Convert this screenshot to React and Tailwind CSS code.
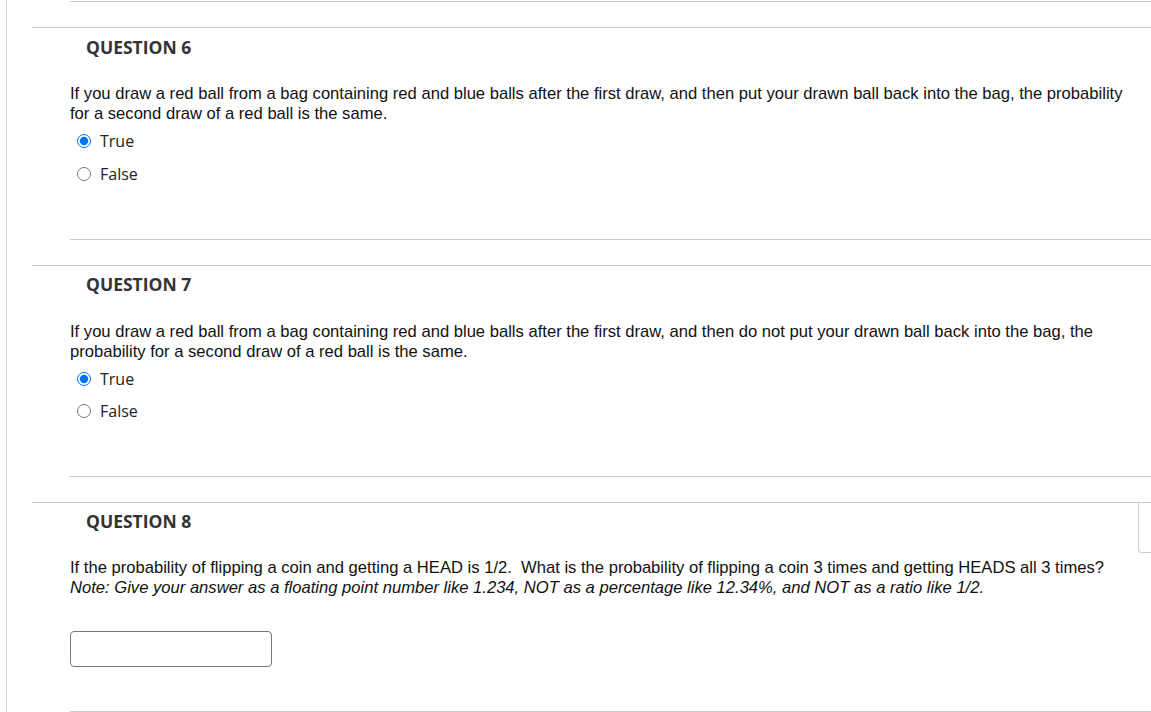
import React from "react";

function Radio({ checked, label, name }) {
  return (
    <label className="flex items-center h-[20px] gap-[9px] pl-[7px]">
      <input
        type="radio"
        name={name}
        defaultChecked={checked}
        className="m-0 w-[14px] h-[14px] accent-[#0075ff]"
      />
      <span className="text-[16px] text-[#222] leading-[20px]" style={{ fontFamily: '"Open Sans", sans-serif' }}>
        {label}
      </span>
    </label>
  );
}

function Heading({ children }) {
  return (
    <div
      className="pl-[54px] font-bold text-[17.5px] leading-[20px] text-[#333] h-[20px]"
      style={{ fontFamily: '"Open Sans", sans-serif' }}
    >
      {children}
    </div>
  );
}

function Body({ children }) {
  return (
    <div
      className="pl-[38px] text-[16.6px] leading-[20px] text-[#111] whitespace-nowrap"
      style={{ fontFamily: '"Liberation Sans", Arial, sans-serif' }}
    >
      {children}
    </div>
  );
}

export default function App() {
  return (
    <div className="relative w-[1151px] h-[712px] overflow-hidden bg-white">
      <div className="absolute left-[6px] top-0 bottom-0 w-px bg-[#d4d4d4]" />
      <div className="pl-[32px]">
        <div className="pl-[38px] pt-[1px]">
          <div className="h-px bg-[#cccccc]" />
        </div>
        <div className="h-[25px]" />
        {/* Question 6 */}
        <div className="border-t border-[#cccccc]">
          <div className="pt-[9px]">
            <Heading>QUESTION 6</Heading>
          </div>
          <div className="pt-[27px]">
            <Body>
              If you draw a red ball from a bag containing red and blue balls after the first draw, and then put your drawn ball back into the bag, the probability
              <br />
              for a second draw of a red ball is the same.
            </Body>
          </div>
          <div className="pl-[38px] pt-[7px] flex flex-col gap-[13px]">
            <Radio name="q6" checked label="True" />
            <Radio name="q6" label="False" />
          </div>
          <div className="pl-[38px] pt-[55px]">
            <div className="h-px bg-[#cccccc]" />
          </div>
          <div className="h-[25px]" />
        </div>
        {/* Question 7 */}
        <div className="border-t border-[#cccccc]">
          <div className="pt-[8px]">
            <Heading>QUESTION 7</Heading>
          </div>
          <div className="pt-[28px]">
            <Body>
              If you draw a red ball from a bag containing red and blue balls after the first draw, and then do not put your drawn ball back into the bag, the
              <br />
              probability for a second draw of a red ball is the same.
            </Body>
          </div>
          <div className="pl-[38px] pt-[7px] flex flex-col gap-[12px]">
            <Radio name="q7" checked label="True" />
            <Radio name="q7" label="False" />
          </div>
          <div className="pl-[38px] pt-[55px]">
            <div className="h-px bg-[#cccccc]" />
          </div>
          <div className="h-[25px]" />
        </div>
        {/* Question 8 */}
        <div className="relative border-t border-[#cccccc]">
          <div className="absolute right-[-12px] top-0 w-[25px] h-[50px] border border-t-0 border-[#cccccc] rounded-bl-[4px]" />
          <div className="pt-[8px]">
            <Heading>QUESTION 8</Heading>
          </div>
          <div className="pt-[27px]">
            <Body>
              If the probability of flipping a coin and getting a HEAD is 1/2.&nbsp; What is the probability of flipping a coin 3 times and getting HEADS all 3 times?
              <br />
              <i>Note: Give your answer as a floating point number like 1.234, NOT as a percentage like 12.34%, and NOT as a ratio like 1/2.</i>
            </Body>
          </div>
          <div className="pl-[38px] pt-[33px]">
            <input
              type="text"
              className="block w-[202px] h-[36px] border border-[#767676] rounded-[4px] outline-none"
            />
          </div>
          <div className="pl-[38px] pt-[44px]">
            <div className="h-px bg-[#cccccc]" />
          </div>
        </div>
      </div>
    </div>
  );
}
